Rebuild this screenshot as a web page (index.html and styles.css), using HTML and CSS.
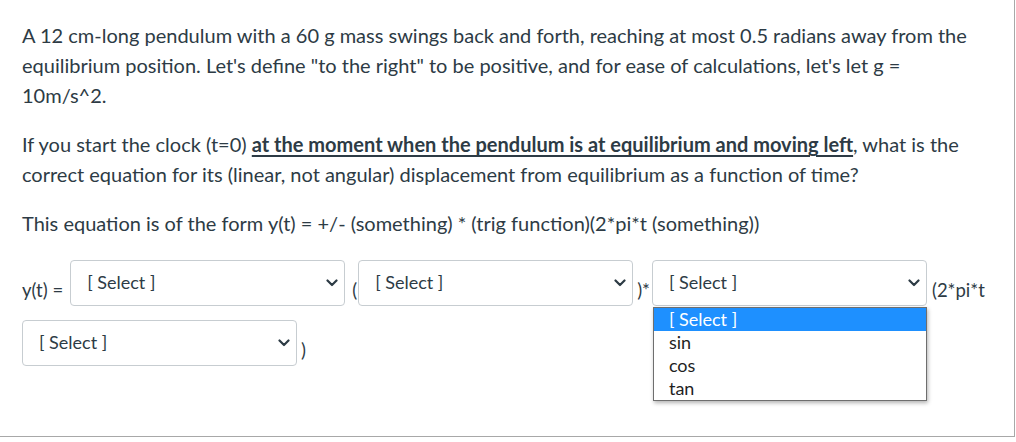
FILE: index.html
```html
<!DOCTYPE html>
<html>
<head>
<meta charset="utf-8">
<link rel="stylesheet" href="styles.css">
</head>
<body>
<div class="question">
  <p>A 12 cm-long pendulum with a 60 g mass swings back and forth, reaching at most 0.5 radians away from the equilibrium position. Let's define "to the right" to be positive, and for ease of calculations, let's let g = 10m/s^2.</p>
  <p>If you start the clock (t=0) <strong class="uline">at the moment when the pendulum is at equilibrium and moving left</strong>, what is the correct equation for its (linear, not angular) displacement from equilibrium as a function of time?</p>
  <p>This equation is of the form y(t) = +/- (something) * (trig function)(2*pi*t (something))</p>
  <div class="row">
    <span class="txt t-lead">y(t) =</span>
    <div class="select"><span>[ Select ]</span><svg class="chev" width="12" height="8" viewBox="0 0 12 8"><path d="M1.5 1.5 L6 6 L10.5 1.5" fill="none" stroke="#2d3b45" stroke-width="2.2" stroke-linecap="round" stroke-linejoin="round"/></svg></div>
    <span class="txt t-paren">(</span>
    <div class="select"><span>[ Select ]</span><svg class="chev" width="12" height="8" viewBox="0 0 12 8"><path d="M1.5 1.5 L6 6 L10.5 1.5" fill="none" stroke="#2d3b45" stroke-width="2.2" stroke-linecap="round" stroke-linejoin="round"/></svg></div>
    <span class="txt t-star">)*</span>
    <div class="select open"><span>[ Select ]</span><svg class="chev" width="12" height="8" viewBox="0 0 12 8"><path d="M1.5 1.5 L6 6 L10.5 1.5" fill="none" stroke="#2d3b45" stroke-width="2.2" stroke-linecap="round" stroke-linejoin="round"/></svg>
      <ul class="menu">
        <li class="active">[ Select ]</li>
        <li>sin</li>
        <li>cos</li>
        <li>tan</li>
      </ul>
    </div>
    <span class="txt t-after t-end">(2*pi*t</span>
  </div>
  <div class="row row2">
    <div class="select"><span>[ Select ]</span><svg class="chev" width="12" height="8" viewBox="0 0 12 8"><path d="M1.5 1.5 L6 6 L10.5 1.5" fill="none" stroke="#2d3b45" stroke-width="2.2" stroke-linecap="round" stroke-linejoin="round"/></svg></div>
    <span class="txt t-after">)</span>
  </div>
</div>
</body>
</html>
```
FILE: styles.css
```css
html, body {
  margin: 0;
  padding: 0;
  background: #fff;
}
body {
  font-family: Lato, "Liberation Sans", sans-serif;
  color: #2d3b45;
}
.question {
  box-sizing: border-box;
  width: 1015px;
  height: 437px;
  border-right: 1px solid #a8a8a8;
  border-bottom: 1px solid #a8a8a8;
  padding: 20px 46px 0 22px;
  font-size: 20px;
  line-height: 30px;
}
.question p {
  margin: 0 0 19px 0;
}
.uline {
  font-weight: 700;
  text-decoration: underline;
  text-decoration-thickness: 2px;
  text-underline-offset: 3px;
}
.row {
  display: flex;
  align-items: flex-start;
  margin-top: 22px;
}
.row2 {
  margin-top: 14px;
}
.txt {
  margin-top: 15px;
  white-space: nowrap;
  font-size: 18.5px;
  flex-shrink: 0;
}
.t-lead {
  margin-right: 7px;
}
.t-paren {
  margin-left: 7px;
  margin-right: 1px;
}
.t-star {
  margin-left: 4px;
  margin-right: 2px;
}
.t-after {
  margin-left: 4px;
}
.t-end {
  margin-left: 5px;
}
.select {
  position: relative;
  flex-shrink: 0;
  box-sizing: border-box;
  width: 275px;
  height: 46px;
  border: 1px solid #c7cdd1;
  border-radius: 4px;
  background: #fff;
  padding: 0 16px;
  font-size: 18px;
  line-height: 44px;
  display: flex;
  align-items: center;
  justify-content: space-between;
}
.select span {
  line-height: 1;
  margin-top: -3px;
}
.chev {
  margin-right: -10px;
  margin-top: -1px;
}
.menu {
  position: absolute;
  left: 0;
  top: 46px;
  width: 274px;
  box-sizing: border-box;
  margin: 0;
  padding: 0;
  list-style: none;
  background: #fff;
  border: 1px solid #6e6e6e;
  box-shadow: 1px 2px 4px rgba(0,0,0,0.3);
  z-index: 5;
  font-size: 18px;
  line-height: 23px;
  color: #1f1f1f;
}
.menu li {
  height: 23px;
  padding-left: 15px;
}
.menu li.active {
  background: #1e90ff;
  color: #fff;
}
```
